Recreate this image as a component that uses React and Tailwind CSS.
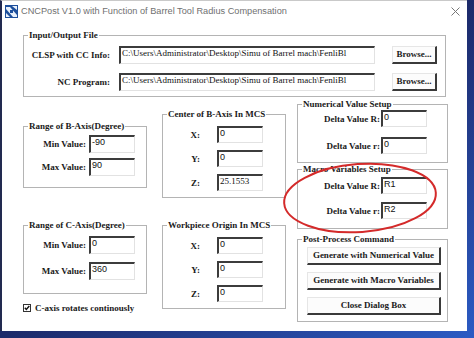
import React from 'react';

const serif = { fontFamily: '"Liberation Serif", "Times New Roman", serif' };
const sans = { fontFamily: '"Liberation Sans", Arial, sans-serif' };

const Field = ({ value, mono, className = '' }) => (
  <div
    style={mono ? serif : sans}
    className={`bg-white border-t-2 border-l-2 border-r border-b border-t-[#3c3c3c] border-l-[#3c3c3c] border-r-[#e2e2e2] border-b-[#e2e2e2] pl-[1px] text-[9px] leading-[11px] text-[#111] overflow-hidden whitespace-nowrap ${className}`}
  >
    {value}
  </div>
);

const Group = ({ title, className = '', children }) => (
  <fieldset className={`border border-[#b4b4b4] ${className}`}>
    <legend style={serif} className="ml-[4px] px-[1px] text-[9px] leading-[10px] font-bold text-[#1a1a1a]">
      {title}
    </legend>
    {children}
  </fieldset>
);

const Label = ({ children, className = '' }) => (
  <div style={serif} className={`text-right text-[9px] leading-[10px] font-bold text-[#1a1a1a] whitespace-nowrap ${className}`}>
    {children}
  </div>
);

const Button = ({ children, className = '' }) => (
  <div
    style={serif}
    className={`flex items-center justify-center bg-[#fcfcfc] border-t border-l border-r-2 border-b-2 border-t-[#e6e6e6] border-l-[#e6e6e6] border-r-[#3a3a3a] border-b-[#3a3a3a] text-[9px] font-bold text-[#1a1a1a] whitespace-nowrap ${className}`}
  >
    {children}
  </div>
);

const AppIcon = () => (
  <svg width="13" height="13" viewBox="0 0 13 13">
    <rect width="13" height="13" fill="#1d4f9c" />
    <path d="M1 2 L5 2 L12 10 L12 12 L8 12 L1 4 Z" fill="#e8f0fb" />
    <path d="M7 1 L12 1 L12 5 Z" fill="#e8f0fb" />
    <path d="M1 8 L5 12 L1 12 Z" fill="#e8f0fb" />
    <rect x="5" y="5" width="3" height="3" fill="#1d4f9c" />
  </svg>
);

export default function App() {
  const path = 'C:\\Users\\Administrator\\Desktop\\Simu of Barrel mach\\FenliBl';

  return (
    <div className="relative w-[474px] h-[338px] overflow-hidden bg-gradient-to-br from-[#1a2358] via-[#1c2a6a] to-[#2b5bc4]">
      <div className="w-[467px] h-[331px] bg-white border-l-2 border-l-[#222a50] border-t border-t-[#c9c9c9] flex flex-col">
        {/* title bar */}
        <div className="h-[21px] flex items-center pl-[3px]">
          <AppIcon />
          <span style={sans} className="ml-[3px] text-[9.2px] text-[#707070] whitespace-nowrap">
            CNCPost V1.0 with Function of Barrel Tool Radius Compensation
          </span>
          <svg className="ml-auto mr-[7px]" width="9" height="9" viewBox="0 0 9 9">
            <path d="M0.5 0.5 L8.5 8.5 M8.5 0.5 L0.5 8.5" stroke="#777" strokeWidth="1" />
          </svg>
        </div>

        {/* input / output */}
        <Group title="Input/Output File" className="ml-[21px] mt-[8px] w-[423px]">
          <div className="pt-[6px] pb-[5px] flex flex-col gap-[9px]">
            <div className="flex items-center">
              <Label className="w-[86px]">CLSP with CC Info:</Label>
              <Field mono value={path} className="ml-[9px] w-[256px] h-[18px]" />
              <Button className="ml-[17px] w-[45px] h-[18px]">Browse...</Button>
            </div>
            <div className="flex items-center">
              <Label className="w-[86px]">NC Program:</Label>
              <Field mono value={path} className="ml-[9px] w-[256px] h-[18px]" />
              <Button className="ml-[17px] w-[45px] h-[18px]">Browse...</Button>
            </div>
          </div>
        </Group>

        <div className="flex items-start ml-[21px]">
          {/* column 1 */}
          <div className="w-[124px] flex flex-col">
            <Group title="Range of B-Axis(Degree)" className="mt-[24px]">
              <div className="pt-[4px] pb-[11px] flex flex-col gap-[5px]">
                <div className="flex items-center">
                  <Label className="w-[62px]">Min Value:</Label>
                  <Field value="-90" className="ml-[3px] w-[46px] h-[18px]" />
                </div>
                <div className="flex items-center">
                  <Label className="w-[62px]">Max Value:</Label>
                  <Field value="90" className="ml-[3px] w-[46px] h-[18px]" />
                </div>
              </div>
            </Group>
            <Group title="Range of C-Axis(Degree)" className="mt-[32px]">
              <div className="pt-[6px] pb-[13px] flex flex-col gap-[8px]">
                <div className="flex items-center">
                  <Label className="w-[62px]">Min Value:</Label>
                  <Field value="0" className="ml-[3px] w-[46px] h-[18px]" />
                </div>
                <div className="flex items-center">
                  <Label className="w-[62px]">Max Value:</Label>
                  <Field value="360" className="ml-[3px] w-[46px] h-[18px]" />
                </div>
              </div>
            </Group>
            <div className="mt-[9px] flex items-center">
              <svg width="8" height="8" viewBox="0 0 8 8">
                <rect x="0.5" y="0.5" width="7" height="7" fill="#fff" stroke="#333" />
                <path d="M1.8 3.8 L3.3 5.4 L6.3 2" stroke="#111" strokeWidth="1.4" fill="none" />
              </svg>
              <span style={serif} className="ml-[4px] text-[9px] leading-[10px] font-bold text-[#1a1a1a] whitespace-nowrap">
                C-axis rotates continously
              </span>
            </div>
          </div>

          {/* column 2 */}
          <div className="w-[124px] ml-[15px] flex flex-col">
            <Group title="Center of B-Axis In MCS" className="mt-[12px]">
              <div className="pt-[7px] pb-[6px] flex flex-col gap-[7px]">
                {[['X:', '0'], ['Y:', '0'], ['Z:', '25.1553']].map(([l, v]) => (
                  <div key={l} className="flex items-center">
                    <Label className="w-[37px]">{l}</Label>
                    <Field value={v} mono={v.length > 3} className="ml-[17px] w-[46px] h-[17px]" />
                  </div>
                ))}
              </div>
            </Group>
            <Group title="Workpiece Origin In MCS" className="mt-[22px]">
              <div className="pt-[7px] pb-[6px] flex flex-col gap-[7px]">
                {['X:', 'Y:', 'Z:'].map((l) => (
                  <div key={l} className="flex items-center">
                    <Label className="w-[37px]">{l}</Label>
                    <Field value="0" className="ml-[17px] w-[46px] h-[17px]" />
                  </div>
                ))}
              </div>
            </Group>
          </div>

          {/* column 3 */}
          <div className="w-[151px] ml-[11px] flex flex-col">
            <Group title="Numerical Value Setup" className="mt-[2px]">
              <div className="pt-[1px] pb-[8px] flex flex-col gap-[10px]">
                <div className="flex items-center">
                  <Label className="w-[82px]">Delta Value R:</Label>
                  <Field value="0" className="ml-[1px] w-[46px] h-[17px]" />
                </div>
                <div className="flex items-center">
                  <Label className="w-[82px]">Delta Value r:</Label>
                  <Field value="0" className="ml-[1px] w-[46px] h-[17px]" />
                </div>
              </div>
            </Group>
            <Group title="Macro Variables Setup" className="mt-[1px]">
              <div className="pt-[3px] pb-[9px] flex flex-col gap-[8px]">
                <div className="flex items-center">
                  <Label className="w-[82px]">Delta Value R:</Label>
                  <Field value="R1" className="ml-[1px] w-[46px] h-[17px]" />
                </div>
                <div className="flex items-center">
                  <Label className="w-[82px]">Delta Value r:</Label>
                  <Field value="R2" className="ml-[1px] w-[46px] h-[17px]" />
                </div>
              </div>
            </Group>
            <Group title="Post-Process Command" className="mt-[5px]">
              <div className="pt-[3px] pb-[6px] pl-[9px] flex flex-col gap-[7px]">
                <Button className="w-[134px] h-[18px]">Generate with Numerical Value</Button>
                <Button className="w-[134px] h-[18px]">Generate with Macro Variables</Button>
                <Button className="w-[134px] h-[18px]">Close Dialog Box</Button>
              </div>
            </Group>
          </div>
        </div>
      </div>

      {/* red annotation ellipse */}
      <svg className="absolute left-[281px] top-[160px]" width="158" height="76" viewBox="0 0 158 76">
        <ellipse cx="79" cy="38" rx="76" ry="34" fill="none" stroke="#d42a2a" strokeWidth="2" transform="rotate(-4 79 38)" />
      </svg>
    </div>
  );
}
